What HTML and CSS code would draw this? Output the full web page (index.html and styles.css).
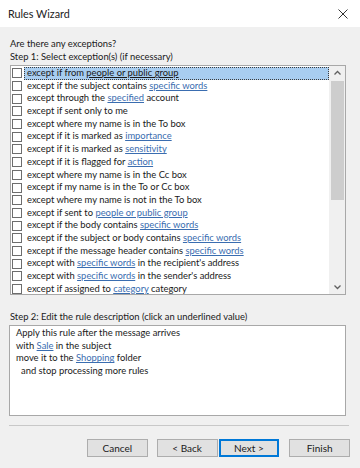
FILE: index.html
```html
<!DOCTYPE html>
<html>
<head>
<meta charset="utf-8">
<link rel="stylesheet" href="styles.css">
</head>
<body>
<div class="dialog">
  <div class="titlebar">
    <span class="title">Rules Wizard</span>
    <svg class="close" width="10" height="10" viewBox="0 0 10 10"><path d="M0.5 0.5 L9.5 9.5 M9.5 0.5 L0.5 9.5" stroke="#333" stroke-width="1" fill="none"/></svg>
  </div>
  <div class="content">
    <div class="label q">Are there any exceptions?</div>
    <div class="label s1">Step 1: Select exception(s) (if necessary)</div>
    <div class="listbox">
      <div class="rows">
        <div class="row sel"><span class="cb"></span><span class="txt">except if from <u>people or public group</u></span></div>
        <div class="row"><span class="cb"></span><span class="txt">except if the subject contains <a>specific words</a></span></div>
        <div class="row"><span class="cb"></span><span class="txt">except through the <a>specified</a> account</span></div>
        <div class="row"><span class="cb"></span><span class="txt">except if sent only to me</span></div>
        <div class="row"><span class="cb"></span><span class="txt">except where my name is in the To box</span></div>
        <div class="row"><span class="cb"></span><span class="txt">except if it is marked as <a>importance</a></span></div>
        <div class="row"><span class="cb"></span><span class="txt">except if it is marked as <a>sensitivity</a></span></div>
        <div class="row"><span class="cb"></span><span class="txt">except if it is flagged for <a>action</a></span></div>
        <div class="row"><span class="cb"></span><span class="txt">except where my name is in the Cc box</span></div>
        <div class="row"><span class="cb"></span><span class="txt">except if my name is in the To or Cc box</span></div>
        <div class="row"><span class="cb"></span><span class="txt">except where my name is not in the To box</span></div>
        <div class="row"><span class="cb"></span><span class="txt">except if sent to <a>people or public group</a></span></div>
        <div class="row"><span class="cb"></span><span class="txt">except if the body contains <a>specific words</a></span></div>
        <div class="row"><span class="cb"></span><span class="txt">except if the subject or body contains <a>specific words</a></span></div>
        <div class="row"><span class="cb"></span><span class="txt">except if the message header contains <a>specific words</a></span></div>
        <div class="row"><span class="cb"></span><span class="txt">except with <a>specific words</a> in the recipient's address</span></div>
        <div class="row"><span class="cb"></span><span class="txt">except with <a>specific words</a> in the sender's address</span></div>
        <div class="row"><span class="cb"></span><span class="txt">except if assigned to <a>category</a> category</span></div>
      </div>
      <div class="scrollbar">
        <svg class="arrow" width="15" height="14" viewBox="0 0 15 14"><path d="M4.5 8.5 L7.5 5.5 L10.5 8.5" stroke="#606060" stroke-width="1.3" fill="none"/></svg>
        <div class="track"><div class="thumb"></div></div>
        <svg class="arrow" width="15" height="14" viewBox="0 0 15 14"><path d="M4.5 5.5 L7.5 8.5 L10.5 5.5" stroke="#606060" stroke-width="1.3" fill="none"/></svg>
      </div>
    </div>
    <div class="label s2">Step 2: Edit the rule description (click an underlined value)</div>
    <div class="desc">
      <div class="line">Apply this rule after the message arrives</div>
      <div class="line">with <a>Sale</a> in the subject</div>
      <div class="line">move it to the <a>Shopping</a> folder</div>
      <div class="line ind">and stop processing more rules</div>
    </div>
    <div class="sep"></div>
    <div class="buttons">
      <button class="btn">Cancel</button>
      <button class="btn back">&lt; Back</button>
      <button class="btn def">Next &gt;</button>
      <button class="btn finish">Finish</button>
    </div>
  </div>
</div>
</body>
</html>
```
FILE: styles.css
```css
* { box-sizing: border-box; }
html, body { margin: 0; padding: 0; }
body {
  width: 360px;
  height: 468px;
  overflow: hidden;
  background: #f0f0f0;
  font-family: "Lato", "Open Sans", sans-serif;
  font-size: 9.4px;
  color: #1a1a1a;
}
.dialog { width: 360px; height: 468px; display: flex; flex-direction: column; }
.titlebar {
  height: 27px;
  background: #ffffff;
  display: flex;
  align-items: center;
  justify-content: space-between;
  padding: 0 12px 0 8px;
}
.title { font-size: 10.8px; color: #222; }
.close { display: block; }
.content { padding: 0 10px 0 10px; display: flex; flex-direction: column; flex: 1; }
.label { line-height: 13px; white-space: nowrap; }
.q { margin-top: 10px; }
.s1 { margin-top: 0px; }
.listbox {
  margin-top: 2px;
  height: 230px;
  width: 336px;
  border: 1px solid #a8a8a8;
  background: #fff;
  display: flex;
}
.rows { flex: 1; padding-top: 1px; }
.row { height: 12.7px; display: flex; align-items: center; white-space: nowrap; }
.cb {
  width: 10px; height: 10px;
  border: 1px solid #6d6d6d;
  background: #fff;
  margin-left: 1px;
  margin-right: 2px;
  flex: none;
}
.txt { line-height: 12.7px; padding-left: 3px; flex: 1; height: 12.7px; }
.row.sel .txt {
  background: #a8cdf0;
  outline: 1px dotted #3b3b3b;
  outline-offset: -1px;
}
u { text-decoration: underline; }
a { color: #3a6db0; text-decoration: underline; }
.scrollbar { width: 16px; display: flex; flex-direction: column; background: #f0f0f0; border-left: 1px solid #f0f0f0; }
.arrow { display: block; flex: none; }
.track { flex: 1; padding: 0 1px; }
.thumb { height: 119px; background: #cdcdcd; margin-top: 1px; }
.s2 { margin-top: 15px; }
.desc {
  margin-top: 2px;
  margin-left: -1px;
  width: 337px;
  height: 91px;
  border: 1px solid #a8a8a8;
  background: #fff;
  padding: 1px 0 0 6px;
}
.line { line-height: 12.7px; white-space: nowrap; }
.ind { padding-left: 5px; }
.sep { margin-top: 9px; margin-left: -1px; width: 340px; height: 1px; background: #c8c8c8; }
.buttons { margin-top: 13px; display: flex; padding-left: 77px; }
.btn {
  font-family: inherit;
  font-size: 10px;
  color: #1a1a1a;
  width: 61px;
  height: 18px;
  border: 1px solid #adadad;
  background: #e1e1e1;
  padding: 0;
  margin: 0;
}
.back { margin-left: 9px; }
.def { margin-left: 1px; border-color: #0078d7; border-width: 1px; box-shadow: inset 0 0 0 1px #0078d7; }
.finish { margin-left: 10px; }
```
